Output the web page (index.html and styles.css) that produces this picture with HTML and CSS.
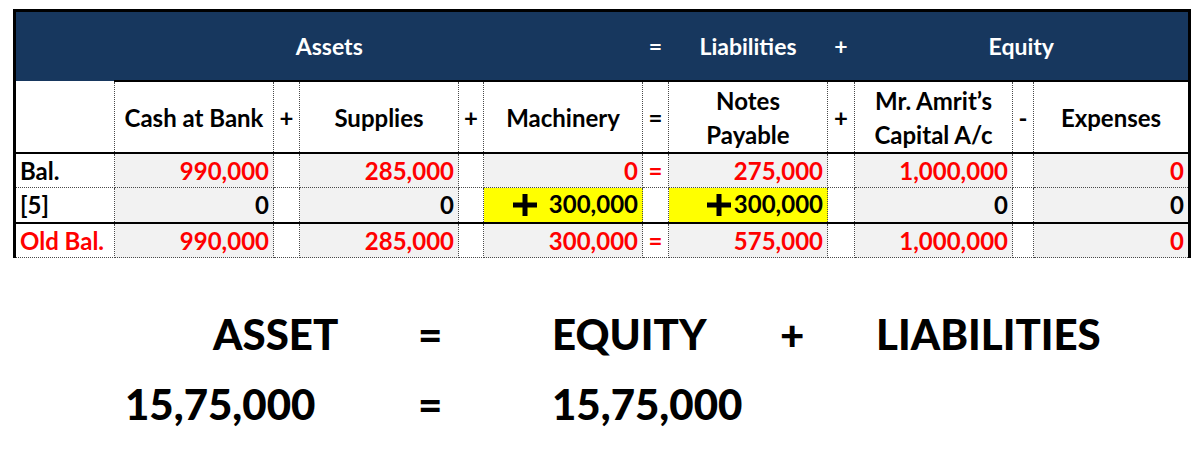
FILE: index.html
```html
<!DOCTYPE html>
<html>
<head>
<meta charset="utf-8">
<link rel="stylesheet" href="styles.css">
</head>
<body>
<div class="page">
  <table class="ledger">
    <colgroup>
      <col class="c-label"><col class="c-val"><col class="c-op"><col class="c-val"><col class="c-op2"><col class="c-val"><col class="c-op"><col class="c-val"><col class="c-op3"><col class="c-val2"><col class="c-op4"><col class="c-val3">
    </colgroup>
    <tr class="r-top">
      <th colspan="6" class="top">Assets</th>
      <th class="top">=</th>
      <th class="top">Liabilities</th>
      <th class="top">+</th>
      <th colspan="3" class="top">Equity</th>
    </tr>
    <tr class="r-head">
      <th class="blank"></th>
      <th class="hd">Cash at Bank</th>
      <th class="hd op">+</th>
      <th class="hd">Supplies</th>
      <th class="hd op">+</th>
      <th class="hd">Machinery</th>
      <th class="hd op">=</th>
      <th class="hd">Notes<br>Payable</th>
      <th class="hd op">+</th>
      <th class="hd">Mr. Amrit’s<br>Capital A/c</th>
      <th class="hd op">-</th>
      <th class="hd">Expenses</th>
    </tr>
    <tr class="r-data r-bal">
      <td class="lbl">Bal.</td>
      <td class="val red">990,000</td>
      <td class="op"></td>
      <td class="val red">285,000</td>
      <td class="op"></td>
      <td class="val red">0</td>
      <td class="op red">=</td>
      <td class="val red">275,000</td>
      <td class="op"></td>
      <td class="val red">1,000,000</td>
      <td class="op"></td>
      <td class="val red">0</td>
    </tr>
    <tr class="r-data r-txn">
      <td class="lbl">[5]</td>
      <td class="val">0</td>
      <td class="op"></td>
      <td class="val">0</td>
      <td class="op"></td>
      <td class="val hl"><span class="plus wide"><svg width="24" height="22" viewBox="0 0 24 22"><rect x="0" y="8.5" width="24" height="5" fill="#000"/><rect x="9.5" y="0" width="5" height="22" fill="#000"/></svg></span>300,000</td>
      <td class="op"></td>
      <td class="val hl"><span class="plus"><svg width="24" height="22" viewBox="0 0 24 22"><rect x="0" y="8.5" width="24" height="5" fill="#000"/><rect x="9.5" y="0" width="5" height="22" fill="#000"/></svg></span>300,000</td>
      <td class="op"></td>
      <td class="val">0</td>
      <td class="op"></td>
      <td class="val">0</td>
    </tr>
    <tr class="r-data r-old">
      <td class="lbl red">Old Bal.</td>
      <td class="val red">990,000</td>
      <td class="op"></td>
      <td class="val red">285,000</td>
      <td class="op"></td>
      <td class="val red">300,000</td>
      <td class="op red">=</td>
      <td class="val red">575,000</td>
      <td class="op"></td>
      <td class="val red">1,000,000</td>
      <td class="op"></td>
      <td class="val red">0</td>
    </tr>
  </table>

  <div class="equation">
    <div class="eq-cell first">ASSET</div>
    <div class="eq-cell">=</div>
    <div class="eq-cell">EQUITY</div>
    <div class="eq-cell">+</div>
    <div class="eq-cell">LIABILITIES</div>
    <div class="eq-cell">15,75,000</div>
    <div class="eq-cell">=</div>
    <div class="eq-cell">15,75,000</div>
  </div>
</div>
</body>
</html>
```
FILE: styles.css
```css
html, body {
  margin: 0;
  padding: 0;
  background: #ffffff;
}

.page {
  padding: 9px 0 0 13px;
  font-family: "Lato", "Liberation Sans", sans-serif;
}

.ledger {
  border-collapse: collapse;
  table-layout: fixed;
  width: 1178px;
  border: 3px solid #000;
  border-bottom: none;
  font-weight: 700;
  font-size: 24px;
  color: #000;
}

.c-label { width: 100px; }
.c-val { width: 159px; }
.c-op { width: 26px; }
.c-op2 { width: 25px; }
.c-op3 { width: 27px; }
.c-val2 { width: 158px; }
.c-op4 { width: 21px; }
.c-val3 { width: 156px; }

.r-top { height: 70px; }
.r-head { height: 70px; }
.r-data { height: 35px; }

.top {
  background: #17375e;
  color: #ffffff;
  font-weight: 700;
  font-size: 23px;
  text-align: center;
  padding: 0;
  border: none;
}

th, td {
  padding: 0;
  border-left: 1px dotted #4a4a4a;
  border-right: 1px dotted #4a4a4a;
  white-space: nowrap;
}

.hd {
  border-top: 2px solid #000;
  text-align: center;
  font-weight: 700;
  line-height: 34px;
  padding-top: 2px;
  background: #fff;
}

.blank {
  border-top: none;
  border-left: none;
  background: #fff;
}

.op {
  text-align: center;
  background: #fff;
}

.lbl {
  text-align: left;
  padding-left: 4px;
  border-left: none;
  background: #fff;
}

.val {
  text-align: right;
  padding-right: 4px;
  background: #f2f2f2;
}

.red { color: #ff0000; }

.hl { background: #ffff00; }

.plus {
  display: inline-block;
  vertical-align: -3px;
  margin-right: 3px;
}

.plus.wide { margin-right: 12px; }

.r-bal td { border-top: 2px solid #000; border-bottom: 1px dotted #4a4a4a; }
.r-txn td { border-bottom: 2px solid #000; }
.r-old td { border-bottom: 1px dotted #4a4a4a; }

.equation {
  display: grid;
  grid-template-columns: 293px 134px 228px 96px auto;
  grid-auto-rows: 70px;
  margin: 41px 0 0 112px;
  font-family: "Lato", "Liberation Sans", sans-serif;
  font-weight: 900;
  font-size: 42px;
  line-height: 70px;
  color: #000;
}

.eq-cell.first { padding-left: 88px; }
```
